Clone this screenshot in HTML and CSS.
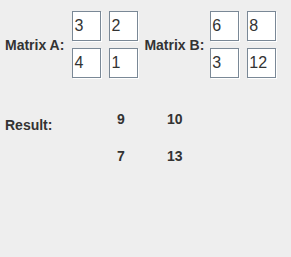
FILE: index.html
```html
<!DOCTYPE html>
<html lang="en">

<head>
    <meta charset="UTF-8">
    <meta name="viewport" content="width=device-width, initial-scale=1.0">
    <title>Matrix Sum</title>

    <link rel="stylesheet" href="styles.css">
</head>

<body>
    <section class="matrices">
        <label class="lbl lbl-a">Matrix A:</label>
        <div class="grid">
            <input class="cell" type="text" value="3">
            <input class="cell" type="text" value="2">
            <input class="cell" type="text" value="4">
            <input class="cell" type="text" value="1">
        </div>

        <label class="lbl lbl-b">Matrix B:</label>
        <div class="grid">
            <input class="cell" type="text" value="6">
            <input class="cell" type="text" value="8">
            <input class="cell" type="text" value="3">
            <input class="cell" type="text" value="12">
        </div>
    </section>

    <section class="result">
        <div class="lbl lbl-res">Result:</div>
        <div class="res-grid">
            <span>9</span>
            <span>10</span>
            <span>7</span>
            <span>13</span>
        </div>
    </section>
</body>

</html>
```

FILE: styles.css
```css
* {
    padding: 0;
    margin: 0;
    box-sizing: border-box;
}

body {
    background: #eeeeee;
    font-family: "Liberation Sans", Arial, sans-serif;
    color: #333333;
}

.matrices {
    display: flex;
    align-items: center;
    padding-top: 11px;
    padding-left: 5px;
}

.lbl {
    font-size: 14px;
    font-weight: bold;
    line-height: 16px;
}

.lbl-a {
    margin-right: 8px;
}

.lbl-b {
    margin-left: 6px;
    margin-right: 6px;
}

.grid {
    display: grid;
    grid-template-columns: 29px 29px;
    gap: 7px 8px;
}

.cell {
    width: 29px;
    height: 30px;
    border: 1px solid #7a8896;
    box-shadow: 1px 1px 0 #ffffff;
    background: white;
    padding: 0 1px;
    font-family: "Liberation Sans", Arial, sans-serif;
    font-size: 16px;
    color: #333333;
    outline: none;
}

.result {
    display: flex;
    align-items: flex-start;
    margin-top: 33px;
    padding-left: 5px;
}

.lbl-res {
    width: 112px;
    margin-top: 6px;
}

.res-grid {
    display: grid;
    grid-template-columns: 50px 50px;
    row-gap: 21px;
    font-size: 14px;
    font-weight: bold;
    line-height: 16px;
}
```
